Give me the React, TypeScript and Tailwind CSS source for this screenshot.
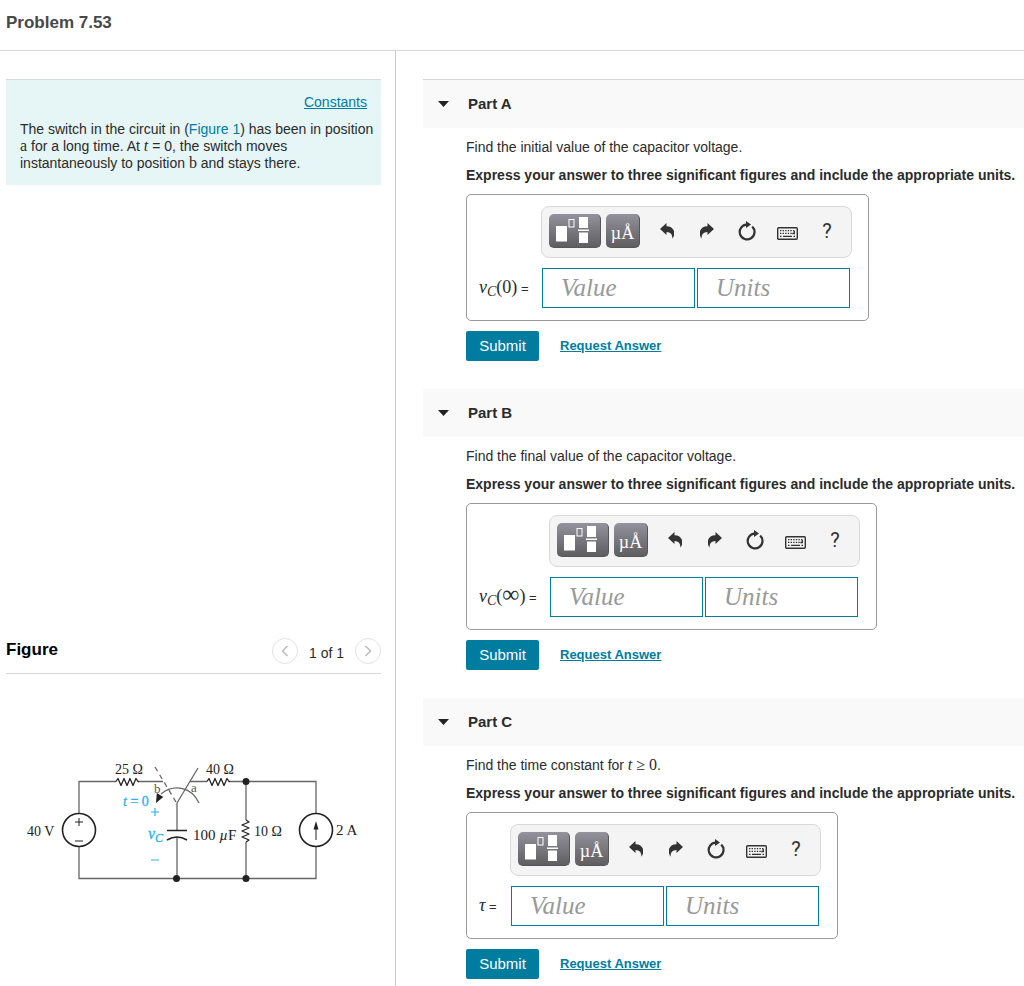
import { useState } from 'react';
import type { ReactNode } from 'react';

const Var = ({ children }: { children: ReactNode }) => (
  <span className="font-['Liberation_Serif',serif] text-base leading-none italic">{children}</span>
);

const Num = ({ children }: { children: ReactNode }) => (
  <span className="font-['Liberation_Serif',serif] text-base leading-none">{children}</span>
);

const VoltageLabel = ({ at }: { at: ReactNode }) => (
  <>
    <span className="font-['Liberation_Serif',serif] text-lg leading-none italic">v</span>
    <sub className="bottom-[-3px] font-['Liberation_Serif',serif] text-sm italic">C</sub>
    <span className="font-['Liberation_Serif',serif] text-lg leading-none">({at})</span> =
  </>
);

type Part = {
  id: string;
  question: ReactNode;
  label: ReactNode;
  labelWidth: string;
};

const parts: Part[] = [
  {
    id: 'A',
    question: 'Find the initial value of the capacitor voltage.',
    label: <VoltageLabel at="0" />,
    labelWidth: 'w-[62px]'
  },
  {
    id: 'B',
    question: 'Find the final value of the capacitor voltage.',
    label: <VoltageLabel at={<span className="text-2xl leading-[0]">∞</span>} />,
    labelWidth: 'w-[70px]'
  },
  {
    id: 'C',
    question: (
      <>
        Find the time constant for <Var>t</Var> <Num>≥ 0</Num>.
      </>
    ),
    label: (
      <>
        <span className="font-['Liberation_Serif',serif] text-lg leading-none italic">τ</span> =
      </>
    ),
    labelWidth: 'w-[31px]'
  }
];

const UndoIcon = () => (
  <svg width="14" height="16" viewBox="0 0 14 16" fill="currentColor" aria-hidden="true">
    <path d="M0 6 6.500 0v3.200c4.800 0 7.800 3 7.800 7 0 2.200-.8 4.200-2 5.600.4-4-1.300-6.600-5.800-6.800V12Z" />
  </svg>
);

const RedoIcon = () => (
  <svg width="14" height="16" viewBox="0 0 14 16" fill="currentColor" aria-hidden="true">
    <path d="M14 6 7.500 0v3.200c-4.800 0-7.800 3-7.800 7 0 2.200.8 4.200 2 5.600-.4-4 1.300-6.600 5.800-6.800V12Z" />
  </svg>
);

const ResetIcon = () => (
  <svg width="18" height="20" viewBox="0 0 18 20" aria-hidden="true">
    <path d="M14.200 5.600A7.400 7.400 0 1 1 8.600 3.600" fill="none" stroke="currentColor" strokeWidth="2.200" />
    <path d="M8 0v7l5-3.500Z" fill="currentColor" />
  </svg>
);

const KeyboardIcon = () => (
  <svg width="21" height="13" viewBox="0 0 21 13" className="shrink-0" aria-hidden="true">
    <rect x="0.700" y="0.700" width="19.600" height="11.600" rx="1" fill="none" stroke="currentColor" strokeWidth="1.400" />
    <path d="M3 3.700h15M3 6.300h12.500" stroke="currentColor" strokeWidth="1.300" strokeDasharray="1.400 1.200" />
    <path d="M3 9.300h1.500M6 9.300h9M16.500 9.300h1.500M17.300 4v2.500h-2" fill="none" stroke="currentColor" strokeWidth="1.300" />
  </svg>
);

const TemplateIcon = () => (
  <svg width="38" height="28" viewBox="0 0 38 28" aria-hidden="true">
    <path d="M0 9h11v15.500H0ZM23 0h9v11h-9ZM23 15.500h9v10.500h-9ZM22 12.500h11v1.400h-11Z" fill="white" />
    <rect x="13" y="2.500" width="5" height="7.500" fill="none" stroke="white" strokeWidth="1" />
  </svg>
);

const toolButton =
  'flex h-[34px] items-center justify-center rounded-[5px] border-r border-b border-[#55555a] bg-linear-to-b from-[#94929d] to-[#5f5f61] text-white';
const iconButton = 'flex h-5 w-5 items-center justify-center';

const Toolbar = () => (
  <div className="flex h-[52px] w-[311px] items-center rounded-lg border border-[#d9d9d9] bg-[#f4f4f4] px-[7px] pb-[2px] text-[#333]">
    <button aria-label="Templates" className={`${toolButton} w-[52px]`}>
      <TemplateIcon />
    </button>
    <button
      aria-label="Symbols"
      className={`${toolButton} ml-[5px] w-[34px] pt-1 font-['Liberation_Serif',serif] text-lg`}
    >
      µÅ
    </button>
    <div className="ml-[17px] flex gap-5">
      <button aria-label="Undo" className={iconButton}>
        <UndoIcon />
      </button>
      <button aria-label="Redo" className={iconButton}>
        <RedoIcon />
      </button>
      <button aria-label="Reset" className={iconButton}>
        <ResetIcon />
      </button>
      <button aria-label="Keyboard shortcuts" className={`${iconButton} pt-1`}>
        <KeyboardIcon />
      </button>
      <button aria-label="Help" className={`${iconButton} font-[Roboto,sans-serif] text-xl leading-none`}>
        ?
      </button>
    </div>
  </div>
);

const fieldClass =
  "h-10 w-[153px] border border-[#007c9f] bg-white pl-[18px] font-['Liberation_Serif',serif] text-[25px] text-[#333] placeholder:text-[#999] placeholder:italic";

const PartSection = ({ part }: { part: Part }) => {
  const [open, setOpen] = useState(true);

  return (
    <section>
      <h2 className="bg-[#f9f9f9]">
        <button
          onClick={() => setOpen(!open)}
          aria-expanded={open}
          className="flex h-12 w-full items-center gap-[19px] pl-[15px] text-left text-[15px] font-bold text-[#2b2b2b]"
        >
          <svg width="11" height="6" viewBox="0 0 11 6" aria-hidden="true">
            <path d="M0 0h11L5.500 6Z" fill="#222" />
          </svg>
          Part {part.id}
        </button>
      </h2>
      {open && (
        <div className="pt-[11px] pb-7 pl-[43px]">
          <p className="h-4 leading-4">{part.question}</p>
          <p className="mt-3 leading-4 font-bold">
            Express your answer to three significant figures and include the appropriate units.
          </p>
          <div className="mt-[11px] flex h-[127px] w-fit items-end rounded-[5px] border border-[#999] py-3 pr-4 pl-3">
            <span className={`${part.labelWidth} h-[30px] shrink-0 text-[13px] leading-4 whitespace-nowrap`}>
              {part.label}
            </span>
            <div className="flex flex-col gap-[10px]">
              <Toolbar />
              <div className="flex gap-[2px] pl-px">
                <input aria-label={`Part ${part.id} value`} placeholder="Value" className={fieldClass} />
                <input aria-label={`Part ${part.id} units`} placeholder="Units" className={fieldClass} />
              </div>
            </div>
          </div>
          <div className="mt-[10px] flex items-center gap-[21px]">
            <button className="h-[30px] w-[73px] rounded-xs bg-[#007c9f] text-[15px] text-white">Submit</button>
            <a href="#" className="text-[13px] font-bold text-[#007c9f] underline">
              Request Answer
            </a>
          </div>
        </div>
      )}
    </section>
  );
};

const Circuit = () => (
  <svg
    viewBox="0 0 375 140"
    className="w-full"
    role="img"
    aria-label="Circuit with a switch, two sources, three resistors and a capacitor"
    fontFamily="'Liberation Serif', serif"
    fontSize="14"
    fill="#222"
  >
    <g fill="none" stroke="#666" strokeWidth="1.300">
      <path d="M73 63.500V31.500H110M133 31.500H157M73 96v32.500H310V97M310 63.500V31.500H224M184 31.500h17M240 31.500V70M240 92v36M171 53V80M171 87v41" />
      <path d="M171 53 192 18" />
      <path d="M149 17 170 52" strokeDasharray="5 4" />
      <path d="M155 44c12-10 30-8 38 9" />
    </g>
    <g fill="none" stroke="#222" strokeWidth="1.300" strokeLinejoin="round">
      <path d="M110 31.500l2-3 3 7 3-7 3 7 3-7 3 7 3-7 2 3h1" />
      <path d="M201 31.500l2-3 3 7 3-7 3 7 3-7 3 7 3-7 2 3h1" />
      <path d="M240 70l3 2-7 3 7 3-7 3 7 3-7 3 7 3-3 2" />
      <path d="M161 80.500h20M161 90q10-6 20 0" strokeWidth="1.600" />
      <circle cx="73" cy="80" r="16.500" strokeWidth="1.600" />
      <circle cx="310" cy="80" r="16.500" strokeWidth="1.600" />
      <path d="M69 72h8M73 68v8M69 91h8" strokeWidth="1" />
      <path d="M310 90V79" strokeWidth="1" />
    </g>
    <path d="M310 71l-2.500 8.500h5ZM150 53l.8-10 6.500 4Z" />
    <circle cx="240" cy="31.500" r="3.500" />
    <circle cx="240" cy="128.500" r="3.500" />
    <circle cx="170.500" cy="128.500" r="3.500" />
    <text x="109" y="24">25 Ω</text>
    <text x="200" y="24">40 Ω</text>
    <text x="21" y="86">40 V</text>
    <text x="187" y="90" fontSize="15">
      100 <tspan fontStyle="italic">µ</tspan>F
    </text>
    <text x="248" y="86">10 Ω</text>
    <text x="330" y="85" fontSize="15">2 A</text>
    <text x="148" y="43" fontSize="13" fill="#555">b</text>
    <text x="185" y="42" fontSize="13" fill="#555">a</text>
    <g fill="#2bb0f0" stroke="#2bb0f0" strokeWidth="0.300">
      <text x="117" y="56">
        <tspan fontStyle="italic">t</tspan> = 0
      </text>
      <text x="142" y="89" fontSize="16" fontStyle="italic">
        v<tspan fontSize="12" dy="3">C</tspan>
      </text>
    </g>
    <path d="M145 62h8M149 58v8M145 110h8" stroke="#2bb0f0" strokeWidth="1.200" />
  </svg>
);

const pagerButton =
  'flex h-[26px] w-[26px] items-center justify-center rounded-full border border-[#e3e3e3] text-[#bbb]';

export default function App() {
  return (
    <div className="flex min-h-screen flex-col bg-white font-['Liberation_Sans',Arial,sans-serif] text-sm text-[#2b2b2b]">
      <header className="border-b border-[#d6d6d6] px-[6px] pt-[13px] pb-[17px]">
        <h1 className="text-[17px] leading-5 font-bold text-[#484848]">Problem 7.53</h1>
      </header>
      <main className="grid grow grid-cols-[99fr_157fr]">
        <aside className="flex flex-col border-r border-[#c3ccd6] pt-7 pr-[14px] pl-[6px]">
          <div className="border-t border-[#d6dcdc] bg-[#e6f5f6] pt-[14px] pb-[13px] pl-[14px]">
            <p className="pr-[14px] text-right leading-4">
              <a href="#" className="text-[#007c9f] underline">
                Constants
              </a>
            </p>
            <p className="mt-[11px] pr-1 leading-[17px]">
              The switch in the circuit in (
              <a href="#figure" className="text-[#007c9f]">
                Figure 1
              </a>
              ) has been in position <Num>a</Num> for a long time. At <Var>t</Var> = 0, the switch moves
              instantaneously to position <Num>b</Num> and stays there.
            </p>
          </div>
          <section id="figure" className="mt-auto pb-[117px]">
            <div className="flex items-start justify-between border-b border-[#d6d6d6] pb-[9px]">
              <h2 className="text-[17px] leading-6 font-bold text-black">Figure</h2>
              <div className="flex items-center gap-[11px]">
                <button aria-label="Previous figure" className={pagerButton}>
                  <svg width="8" height="12" viewBox="0 0 8 12" aria-hidden="true">
                    <path d="M6.500 1 1.500 6l5 5" fill="none" stroke="currentColor" strokeWidth="1.500" />
                  </svg>
                </button>
                <span className="pt-1">1 of 1</span>
                <button aria-label="Next figure" className={pagerButton}>
                  <svg width="8" height="12" viewBox="0 0 8 12" aria-hidden="true">
                    <path d="m1.500 1 5 5-5 5" fill="none" stroke="currentColor" strokeWidth="1.500" />
                  </svg>
                </button>
              </div>
            </div>
            <div className="pt-[76px]">
              <Circuit />
            </div>
          </section>
        </aside>
        <div className="pt-7 pl-[27px]">
          <div className="border-t border-[#d6d6d6]">
            {parts.map((part) => (
              <PartSection key={part.id} part={part} />
            ))}
          </div>
        </div>
      </main>
    </div>
  );
}
